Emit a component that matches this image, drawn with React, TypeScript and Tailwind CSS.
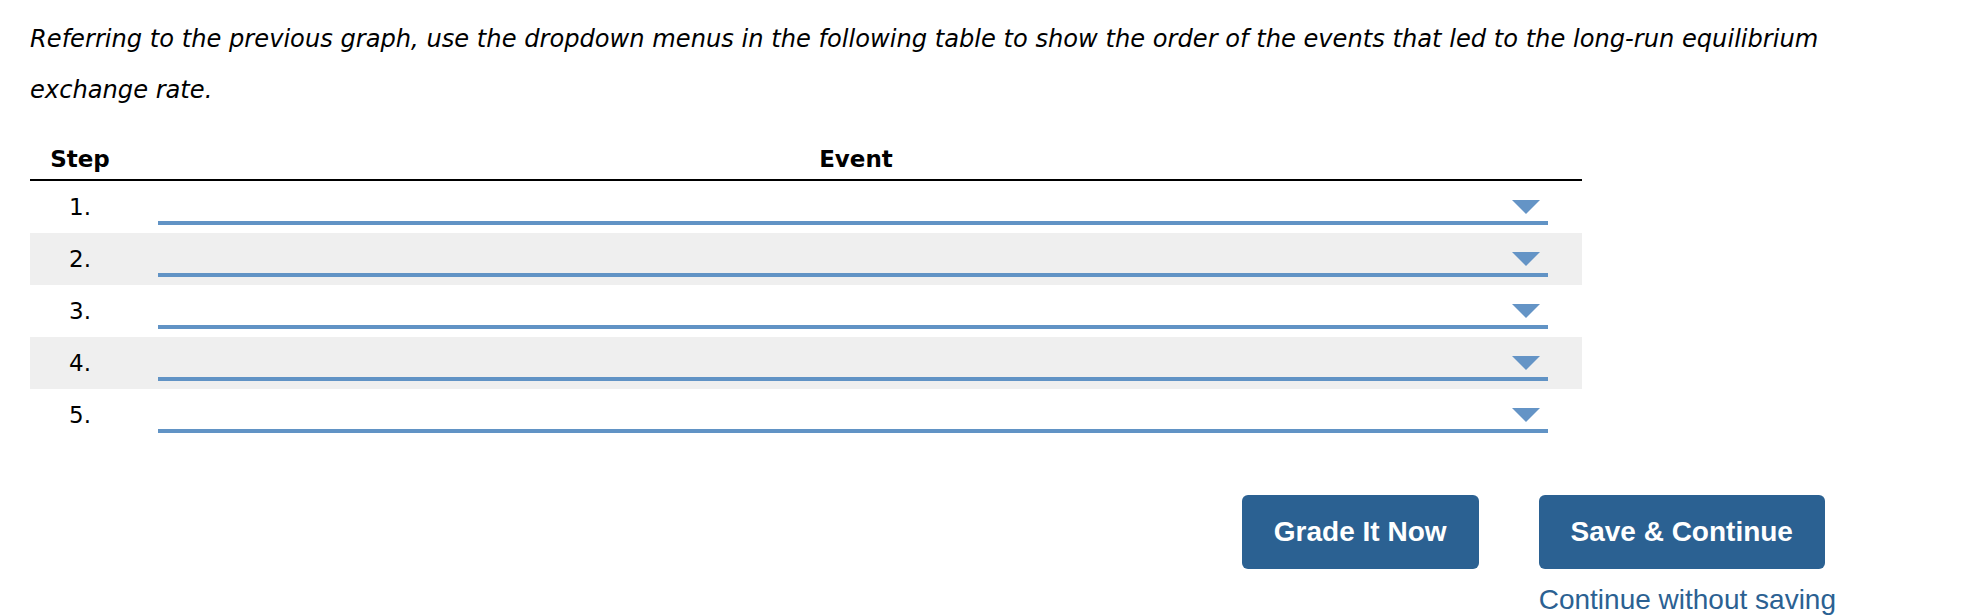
const steps = [1, 2, 3, 4, 5];

function Dropdown() {
  return (
    <div className="relative ml-[28px] mr-[34px] h-full flex-1">
      {/* caret */}
      <svg
        className="absolute right-[8px] top-[19px]"
        width="28"
        height="14"
        viewBox="0 0 28 14"
      >
        <polygon points="0,0 28,0 14,14" fill="#6494c6" />
      </svg>
      <div className="absolute bottom-[8px] left-0 right-0 h-[4px] bg-[#6193c5]" />
    </div>
  );
}

export default function App() {
  return (
    <div className="min-h-[616px] w-[1980px] bg-white pl-[30px] pt-[14px] text-black">
      <p className="font-['DejaVu_Sans',sans-serif] text-[24.15px] italic leading-[51px]">
        Referring to the previous graph, use the dropdown menus in the following table to show the order of the events that led to the long-run equilibrium
        <br />
        exchange rate.
      </p>

      {/* Table */}
      <div className="mt-[30px] w-[1552px] font-['DejaVu_Sans',sans-serif] text-[23px] leading-[26px]">
        <div className="flex h-[35px] border-b-2 border-black font-bold">
          <div className="w-[100px] text-center">Step</div>
          <div className="flex-1 text-center">Event</div>
        </div>
        {steps.map((n) => (
          <div
            key={n}
            className={`flex h-[52px] ${n % 2 === 0 ? "bg-[#efefef]" : "bg-white"}`}
          >
            <div className="w-[100px] pt-[13px] text-center">{n}.</div>
            <Dropdown />
          </div>
        ))}
      </div>

      {/* Actions */}
      <div className="mt-[54px] flex items-start justify-end gap-[60px] pr-[144px] font-['Liberation_Sans',Arial,sans-serif]">
        <button className="flex h-[74px] w-[237px] items-center justify-center rounded-md bg-[#2b6192] text-[28px] font-bold leading-[32px] text-white">
          Grade It Now
        </button>
        <div className="flex flex-col items-start">
          <button className="flex h-[74px] w-[286px] items-center justify-center rounded-md bg-[#2b6192] text-[28px] font-bold leading-[32px] text-white">
            Save &amp; Continue
          </button>
          <a className="mt-[15px] whitespace-nowrap text-[28px] leading-[32px] text-[#2b6192]">
            Continue without saving
          </a>
        </div>
      </div>
    </div>
  );
}
